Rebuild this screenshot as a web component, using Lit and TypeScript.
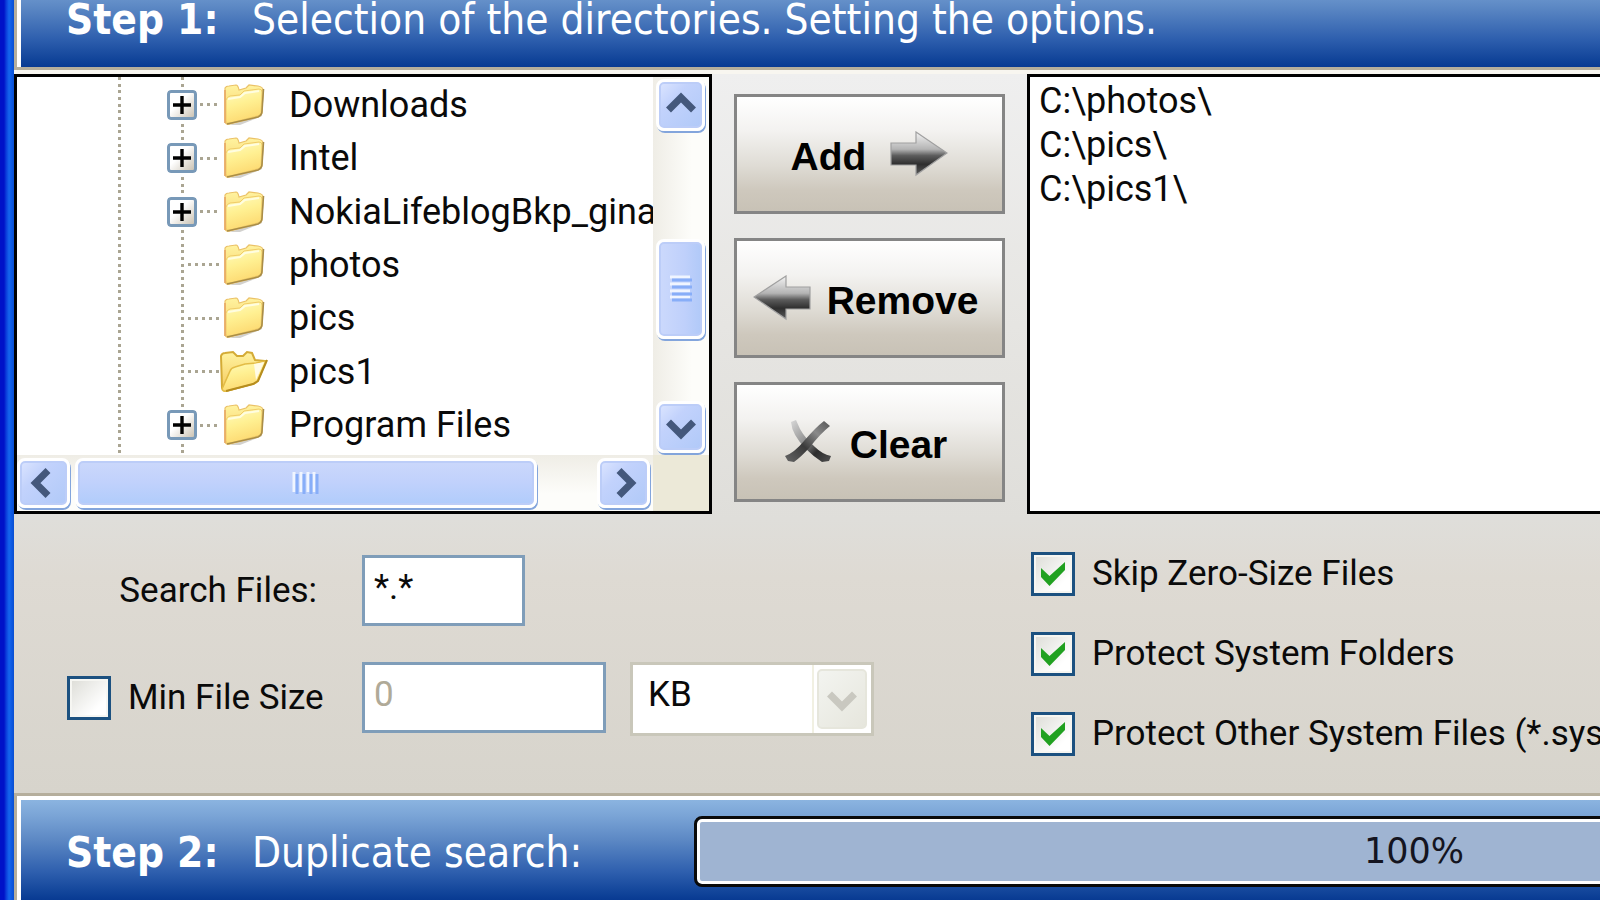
import { LitElement, html, css, svg } from "lit";
import { customElement, property } from "lit/decorators.js";

type Folder = { name: string; kind: "closed" | "open"; expandable: boolean };

const FOLDERS: Folder[] = [
  { name: "Downloads", kind: "closed", expandable: true },
  { name: "Intel", kind: "closed", expandable: true },
  { name: "NokiaLifeblogBkp_gina", kind: "closed", expandable: true },
  { name: "photos", kind: "closed", expandable: false },
  { name: "pics", kind: "closed", expandable: false },
  { name: "pics1", kind: "open", expandable: false },
  { name: "Program Files", kind: "closed", expandable: true },
];

const SELECTED = ["C:\\photos\\", "C:\\pics\\", "C:\\pics1\\"];

const CHEVRONS: Record<string, string> = {
  up: "M4.500 22 L17 9.500 L29.500 22",
  down: "M4.500 12 L17 24.500 L29.500 12",
  left: "M21 4.500 L8.500 17 L21 29.500",
  right: "M12 4.500 L24.500 17 L12 29.500",
};

const chevron = (dir: string) => html`
  <svg class="chevron" viewBox="0 0 34 34" width="34" height="34" aria-hidden="true">
    <path d=${CHEVRONS[dir]} fill="none" stroke="currentColor" stroke-width="7" />
  </svg>
`;

@customElement("folder-icon")
export class FolderIcon extends LitElement {
  @property() kind = "closed";
  static styles = css`
    :host {
      display: block;
      width: 50px;
      height: 44px;
    }
    svg {
      display: block;
    }
  `;
  render() {
    const closed = svg`
      <path d="M9 42 L40 33 L44 7 L42 33 L20 42 Z" fill="#6b675c" opacity=".3" />
      <path d="M5 5 Q6 3 9 3 L16 2 Q18 2 19 7 L26 5 L29 2 L38 3 Q43 4 43 7 L42 30 Q41 33 37 34 L10 41 Q5 42 5 38 Z"
        fill="url(#back)" stroke="#ebc268" stroke-width="1.2" />
      <path d="M6 17 Q7 14 10 13 L20 12 L24 8 L39 6 Q42 6 42 9 L41 30 Q40 33 37 33 L10 40 Q6 41 6 38 Z"
        fill="url(#front)" stroke="#f0cc68" stroke-width="1" />
      <path d="M8 16 L20 14 L25 10 L39 8" fill="none" stroke="#fffde0" stroke-width="2" />
      <path d="M5 7 L5 40" stroke="#e8a866" stroke-width="1.6" />
      <path d="M7 41 L38 34 Q42 32 42 28 L43.500 6" fill="none" stroke="#a98d48" stroke-width="1.6" />`;
    const open = svg`
      <path d="M2 38 L1 6 Q2 3 5 3 L13 2 L17 6 L23 6 L27 2 L32 3 L35 10 L46 11 L38 30 L35 33 L6 41 Z"
        fill="url(#back)" stroke="#d4ab36" stroke-width="2" />
      <path d="M2 39 L10 21 Q11 18 15 17 L25 14 L36 13 L46 11 L38 30 Q37 33 33 34 L7 41 Q3 42 2 39 Z"
        fill="url(#front)" stroke="#e3bc46" stroke-width="1.6" />
      <path d="M34 14 L44 12 L36 30 Z" fill="#fffbe8" />
      <path d="M47 10 L38 31 L33 34 L6 41" fill="none" stroke="#b68d1e" stroke-width="2" />`;
    return html`
      <svg viewBox="0 0 50 44" width="50" height="44" aria-hidden="true">
        <defs>
          <linearGradient id="back" x1="0" y1="0" x2="0" y2="1">
            <stop offset="0" stop-color="#fff3a0" />
            <stop offset="1" stop-color="#f5c95c" />
          </linearGradient>
          <linearGradient id="front" x1="0" y1="0" x2=".3" y2="1">
            <stop offset="0" stop-color="#fffbc0" />
            <stop offset=".5" stop-color="#fff092" />
            <stop offset="1" stop-color="#fdda72" />
          </linearGradient>
        </defs>
        ${this.kind === "open" ? open : closed}
      </svg>
    `;
  }
}

@customElement("action-icon")
export class ActionIcon extends LitElement {
  @property() name = "add";
  static styles = css`
    :host {
      display: block;
    }
    svg {
      display: block;
    }
  `;
  render() {
    const grad = svg`<defs>
      <linearGradient id="metal" x1="0" y1="0" x2="0" y2="1">
        <stop offset="0" stop-color="#f4f4f4" />
        <stop offset=".4" stop-color="#b4b4b4" />
        <stop offset=".55" stop-color="#5c5c5c" />
        <stop offset=".75" stop-color="#2e2e2e" />
        <stop offset="1" stop-color="#5a5a5a" />
      </linearGradient></defs>`;
    if (this.name === "clear")
      return html`<svg viewBox="0 0 50 46" width="50" height="46" aria-hidden="true">
        <defs>
          <linearGradient id="fall" x1="0" y1="0" x2="1" y2="1">
            <stop offset="0" stop-color="#d8d8d8" />
            <stop offset=".45" stop-color="#8c8c8c" />
            <stop offset=".7" stop-color="#2c2c2c" />
            <stop offset="1" stop-color="#505050" />
          </linearGradient>
          <linearGradient id="rise" x1="1" y1="0" x2="0" y2="1">
            <stop offset="0" stop-color="#555" />
            <stop offset=".3" stop-color="#8a8a8a" />
            <stop offset=".6" stop-color="#3a3a3a" />
            <stop offset="1" stop-color="#666" />
          </linearGradient>
        </defs>
        <path d="M7 3 L12 1 L16 10 Q21 19 31 28 Q38 35 47 37 L45 42 L38 43 Q30 38 22 30 Q8 16 7 3 Z" fill="url(#fall)" />
        <path d="M46 7 L40 2 Q32 8 20 22 Q10 34 1 37 L4 42 L10 43 Q17 38 26 28 Q36 15 46 7 Z" fill="url(#rise)" />
      </svg>`;
    const shape =
      this.name === "add"
        ? "M1 12 L26 12 L26 1 L57 22 L26 44 L26 34 L1 34 Z"
        : "M57 12 L33 12 L33 1 L1 22 L33 44 L33 34 L57 34 Z";
    return html`<svg viewBox="0 0 58 46" width="58" height="46" aria-hidden="true">
      ${grad}
      <path d=${shape} fill="url(#metal)" stroke="#a0a0a0" stroke-width="1.200" />
    </svg>`;
  }
}

@customElement("check-option")
export class CheckOption extends LitElement {
  @property() label = "";
  @property({ type: Boolean }) checked = false;
  static styles = css`
    :host {
      display: block;
    }
    .option {
      display: flex;
      align-items: center;
      gap: 17px;
      height: 44px;
      white-space: nowrap;
    }
    .box {
      display: grid;
      flex: none;
      width: 44px;
      height: 44px;
    }
    .box > * {
      grid-area: 1 / 1;
    }
    input {
      appearance: none;
      box-sizing: border-box;
      width: 44px;
      height: 44px;
      margin: 0;
      border: 3px solid #1c5180;
      background: linear-gradient(135deg, #dcdcd6, #ffffff 75%);
      box-shadow: inset 0 0 0 2px #f6f6f2;
    }
    svg {
      pointer-events: none;
    }
  `;
  render() {
    return html`<label class="option">
      <span class="box">
        <input type="checkbox" .checked=${this.checked} />
        ${this.checked
          ? html`<svg viewBox="0 0 44 44" width="44" height="44" aria-hidden="true">
              <path d="M10 16 L18.500 24 L34 10 L34 18 L18.500 34 L10 25 Z" fill="#21a121" />
            </svg>`
          : ""}
      </span>
      <span>${this.label}</span>
    </label>`;
  }
}

@customElement("app-root")
export class AppRoot extends LitElement {
  static styles = css`
    :host {
      display: block;
      font-family: Roboto, "Liberation Sans", sans-serif;
      font-size: 36px;
      line-height: 44px;
      color: #0a0a0a;
    }
    .window {
      box-sizing: border-box;
      min-height: 100vh;
      padding-left: 14px;
      overflow: hidden;
      background: linear-gradient(90deg, #0012c8 0 4px, #0a3ad8 6px, #1566ee 9px, #0b57e0 12px, #0a4fd0 14px);
    }
    .banner {
      box-sizing: border-box;
      display: flex;
      align-items: center;
      height: 104px;
      padding: 0 0 0 49px;
      border-left: 3px solid #b5ae9c;
      box-shadow: inset 4px 0 #ffffff, inset 0 4px #ffffff;
      background: linear-gradient(#8bb4e0, #7aa4d6 16%, #5c88c4 40%, #2e5fae 72%, #0f4298 94%, #083a92)
        4px 4px / 100% 100px no-repeat;
      font-family: "DejaVu Sans Condensed", "DejaVu Sans", sans-serif;
      color: #ffffff;
      white-space: nowrap;
    }
    .first {
      margin-top: -37px;
    }
    .rule {
      height: 3px;
      background: #b5ae9c;
    }
    .gutter {
      height: 4px;
      background: #f8f6f0;
    }
    .banner h2 {
      display: flex;
      margin: 0;
      padding-top: 10px;
      font-size: 42px;
      font-weight: 400;
    }
    .banner b {
      flex: none;
      width: 186px;
    }
    .progress {
      box-sizing: border-box;
      flex: none;
      width: 90vw;
      height: 71px;
      margin: 6px -534px 0 auto;
      border: 3px solid #0a0a0a;
      border-radius: 8px;
      box-shadow: inset 0 0 0 3px #ffffff;
      background: #9fb4d2;
      color: #141420;
      font-family: "DejaVu Sans", sans-serif;
      font-size: 35px;
      line-height: 65px;
      text-align: center;
    }
    .panel {
      background: linear-gradient(#efefef, #e6e5e2 35%, #dfdeda 62%, #dedad3 70%, #d7d4cc);
    }
    .pick {
      display: grid;
      grid-template-columns: 698px 271px minmax(0, 1fr);
      gap: 22px;
      margin-right: -3px;
    }
    .frame {
      border: 3px solid #000000;
      background: #ffffff;
    }
    .tree {
      display: grid;
      grid-template-columns: minmax(0, 1fr) 56px;
      grid-template-rows: minmax(0, 1fr) 56px;
    }
    .nodes {
      display: grid;
      grid-auto-rows: 1fr;
      margin: 0;
      padding: 1px 0 3px 147px;
      overflow: hidden;
      list-style: none;
      white-space: nowrap;
      background:
        linear-gradient(#aaa592 3px, transparent 3px 7px, #aaa592 7px 10px, transparent 10px 13px, #aaa592 13px 16px, transparent 16px) 101px 0 / 3px 20px repeat-y,
        linear-gradient(#aaa592 3px, transparent 3px 7px, #aaa592 7px 10px, transparent 10px 13px, #aaa592 13px 16px, transparent 16px) 164px 0 / 3px 20px repeat-y;
    }
    .node {
      display: grid;
      grid-template-columns: 36px 20px 50px 1fr;
      align-items: center;
    }
    .node > span {
      padding-left: 19px;
    }
    .expander {
      box-sizing: border-box;
      display: grid;
      place-items: center;
      width: 30px;
      height: 30px;
      margin-left: 3px;
      padding: 0;
      border: 3px solid #7899b8;
      border-radius: 4px;
      outline: 3px solid #ffffff;
      background: linear-gradient(135deg, #ffffff 40%, #cbc3b4);
    }
    .dots {
      height: 3px;
      background: linear-gradient(90deg, #aaa592 3px, transparent 3px) 0 0 / 7px 3px repeat-x;
    }
    .long {
      grid-column: 1 / 3;
      margin-left: 24px;
    }
    .track {
      display: flex;
    }
    .vertical {
      flex-direction: column;
      padding: 2px 2px 2px 3px;
      background: linear-gradient(90deg, #efede6, #fdfdfa 70%);
    }
    .horizontal {
      padding: 3px 3px 1px 0;
      background: linear-gradient(#efede6, #fdfdfa 70%);
    }
    .corner {
      background: #ece9d8;
    }
    .bar {
      box-sizing: border-box;
      display: grid;
      place-items: center;
      flex: none;
      padding: 0;
      border: 3px solid #ffffff;
      border-radius: 8px;
      background: linear-gradient(135deg, #dde6ff, #c2d2fc 35%, #b0c9f8);
      box-shadow: inset 0 0 0 2px #bccdf8, 1px 2px 0 #83a5dc;
      color: #44587c;
    }
    .vertical .bar {
      width: 49px;
      height: 52px;
    }
    .horizontal .bar {
      width: 53px;
      height: 50px;
    }
    .vertical .thumb {
      height: 100px;
      margin: 108px 0 auto;
      background: linear-gradient(90deg, #ccd9fc, #bfd0fb 60%, #b0c9f8);
    }
    .horizontal .thumb {
      width: 462px;
      margin: 0 auto 0 5px;
      background: linear-gradient(#cbd8fb, #c0d1fc 50%, #b0ccfb);
    }
    .actions {
      display: grid;
      grid-auto-rows: 120px;
      gap: 24px;
      padding: 20px 0 12px;
    }
    .action {
      display: flex;
      align-items: center;
      justify-content: center;
      gap: 24px;
      padding: 0;
      border: 3px solid #858585;
      background: linear-gradient(#ffffff, #f3f2f0 30%, #dfdcd5 60%, #cec8bd 82%, #c8c2b6);
      color: #000000;
      font-family: "Liberation Sans", sans-serif;
      font-size: 39px;
      font-weight: 700;
    }
    .action span {
      padding-top: 6px;
    }
    .remove,
    .clear {
      gap: 16px;
      padding-right: 8px;
    }
    .chosen {
      margin: 0;
      padding: 2px 9px;
      list-style: none;
    }
    .options {
      display: grid;
      grid-template-columns: 964px minmax(0, 1fr);
      padding: 38px 0 37px 53px;
      font-size: 35px;
    }
    .filters {
      display: grid;
      grid-template-columns: 295px 244px 244px;
      grid-auto-rows: 71px;
      row-gap: 36px;
      align-items: center;
      padding-top: 3px;
      white-space: nowrap;
    }
    .search {
      justify-self: end;
      padding-right: 45px;
    }
    .field {
      box-sizing: border-box;
      width: 100%;
      height: 71px;
      padding: 0 9px 6px;
      border: 3px solid #7f9db9;
      background: #ffffff;
      color: inherit;
      font: inherit;
    }
    .mask {
      grid-column: 2 / 4;
      width: 163px;
    }
    .size {
      color: #b0aa98;
    }
    .unit {
      display: grid;
      align-self: start;
      width: 244px;
      height: 74px;
      margin-left: 24px;
    }
    .unit > * {
      grid-area: 1 / 1;
    }
    .unit select {
      appearance: none;
      box-sizing: border-box;
      width: 100%;
      height: 74px;
      padding: 0 60px 9px 15px;
      border: 3px solid #c9c7ba;
      border-radius: 0;
      background: linear-gradient(90deg, transparent 179px, #f1f0e2 179px 181px, transparent 181px) #ffffff;
      color: inherit;
      font: inherit;
      opacity: 1;
    }
    .drop {
      box-sizing: border-box;
      display: grid;
      place-items: center;
      place-self: center end;
      width: 50px;
      height: 60px;
      margin-right: 7px;
      border: 2px solid #e6e6dc;
      border-radius: 5px;
      background: linear-gradient(135deg, #f3f4f0, #e6e6dd);
      color: #c9c8c0;
      pointer-events: none;
    }
    .checks {
      display: grid;
      align-content: start;
      gap: 36px;
    }
  `;

  private node(f: Folder) {
    return html`<li class="node">
      ${f.expandable
        ? html`<button class="expander" aria-label=${"Expand " + f.name}>
              <svg viewBox="0 0 18 18" width="18" height="18" aria-hidden="true">
                <path d="M9 0 V18 M0 9 H18" stroke="#000" stroke-width="3.400" />
              </svg>
            </button>
            <div class="dots"></div>`
        : html`<div class="dots long"></div>`}
      <folder-icon .kind=${f.kind}></folder-icon>
      <span>${f.name}</span>
    </li>`;
  }

  render() {
    return html`
      <div class="window">
        <header class="banner first">
          <h2><b>Step 1:</b>Selection of the directories. Setting the options.</h2>
        </header>
        <div class="rule"></div>
        <div class="gutter"></div>
        <main class="panel">
          <section class="pick">
            <div class="frame tree">
              <ul class="nodes">
                ${FOLDERS.map((f) => this.node(f))}
              </ul>
              <div class="track vertical">
                <button class="bar" aria-label="Scroll up">${chevron("up")}</button>
                <div class="bar thumb">
                  <svg viewBox="0 0 24 28" width="24" height="28" aria-hidden="true">
                    <path d="M1 2 H21 M1 9 H21 M1 16 H21 M1 22 H21" stroke="#f0f5ff" stroke-width="3" />
                    <path d="M3 5 H23 M3 12 H23 M3 19 H23 M3 25 H23" stroke="#88aef8" stroke-width="3" />
                  </svg>
                </div>
                <button class="bar" aria-label="Scroll down">${chevron("down")}</button>
              </div>
              <div class="track horizontal">
                <button class="bar" aria-label="Scroll left">${chevron("left")}</button>
                <div class="bar thumb">
                  <svg viewBox="0 0 28 24" width="28" height="24" aria-hidden="true">
                    <path d="M2 1 V21 M9 1 V21 M16 1 V21 M22 1 V21" stroke="#f0f5ff" stroke-width="3" />
                    <path d="M5 3 V23 M12 3 V23 M19 3 V23 M25 3 V23" stroke="#88aef8" stroke-width="3" />
                  </svg>
                </div>
                <button class="bar" aria-label="Scroll right">${chevron("right")}</button>
              </div>
              <div class="corner"></div>
            </div>
            <div class="actions">
              <button class="action"><span>Add</span><action-icon name="add"></action-icon></button>
              <button class="action remove"><action-icon name="remove"></action-icon><span>Remove</span></button>
              <button class="action clear"><action-icon name="clear"></action-icon><span>Clear</span></button>
            </div>
            <ul class="frame chosen">
              ${SELECTED.map((p) => html`<li>${p}</li>`)}
            </ul>
          </section>
          <section class="options">
            <div class="filters">
              <label class="search" for="mask">Search Files:</label>
              <input class="field mask" id="mask" type="text" value="*.*" />
              <check-option label="Min File Size"></check-option>
              <input class="field size" type="text" value="0" aria-label="Min File Size" disabled />
              <div class="unit">
                <select aria-label="Size unit" disabled>
                  <option>KB</option>
                </select>
                <span class="drop">${chevron("down")}</span>
              </div>
            </div>
            <div class="checks">
              <check-option label="Skip Zero-Size Files" checked></check-option>
              <check-option label="Protect System Folders" checked></check-option>
              <check-option label="Protect Other System Files (*.sys" checked></check-option>
            </div>
          </section>
        </main>
        <div class="rule"></div>
        <header class="banner second">
          <h2><b>Step 2:</b>Duplicate search:</h2>
          <div class="progress" role="progressbar" aria-valuenow="100">100%</div>
        </header>
      </div>
    `;
  }
}
